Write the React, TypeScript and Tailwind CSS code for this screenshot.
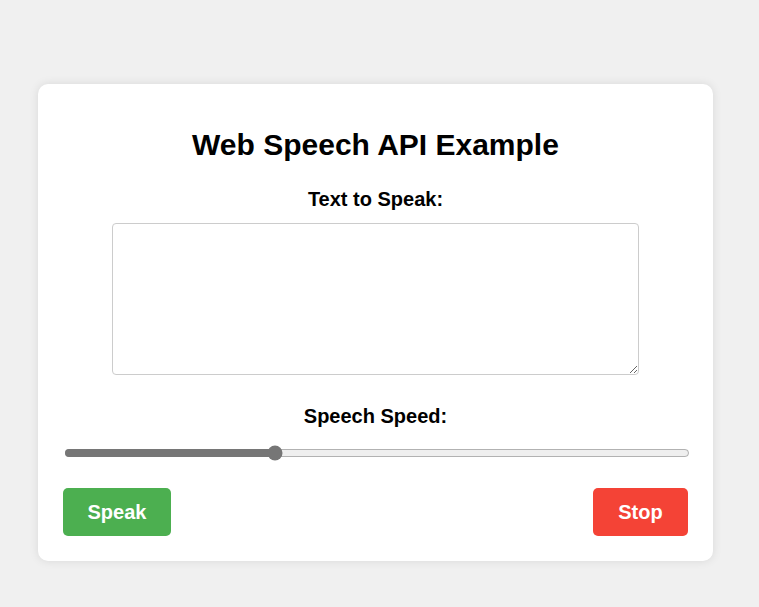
import React, { useState } from "react";

export default function App() {
  const [rate, setRate] = useState(1);
  return (
    <div className="min-h-[607px] w-full bg-[#f0f0f0] pt-[84px] font-['Liberation_Sans',Arial,sans-serif]">
      <div className="ml-[38px] flex h-[477px] w-[675px] flex-col rounded-[10px] bg-white px-[25px] pt-[44px] pb-[25px] shadow-[0_0_10px_rgba(0,0,0,0.1)]">
        <h1 className="text-center text-[30px] leading-[34px] font-bold text-black">Web Speech API Example</h1>
        <label className="mt-[26px] text-center text-[20px] leading-[23px] font-bold text-black">Text to Speak:</label>
        <textarea className="mx-auto mt-[12px] block h-[152px] w-[527px] rounded-[4px] border border-[#cccccc] bg-white p-2" />
        <label className="mt-[30px] text-center text-[20px] leading-[23px] font-bold text-black">Speech Speed:</label>
        <input
          type="range"
          min={0.5}
          max={2}
          step={0.1}
          value={rate}
          onChange={(e) => setRate(parseFloat(e.target.value))}
          className="mt-[17px] ml-[1px] h-[16px] w-[626px] accent-[#767676]"
        />
        <div className="mt-auto flex items-center justify-between">
          <button className="h-[48px] w-[108px] rounded-[5px] bg-[#4caf50] text-[20px] font-bold text-white">Speak</button>
          <button className="h-[48px] w-[95px] rounded-[5px] bg-[#f44336] text-[20px] font-bold text-white">Stop</button>
        </div>
      </div>
    </div>
  );
}
